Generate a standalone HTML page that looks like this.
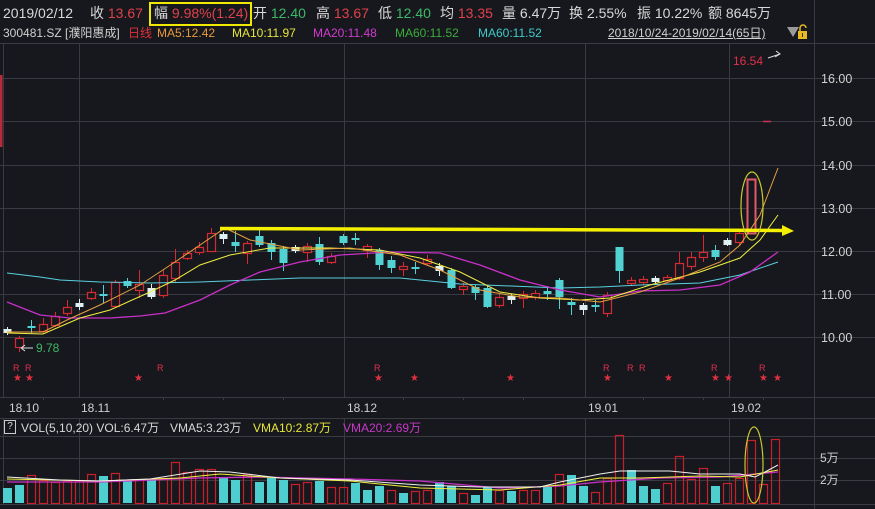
<!DOCTYPE html>
<html><head><meta charset="utf-8">
<style>
html,body{margin:0;padding:0;background:#17181d;}
#w{position:relative;width:875px;height:509px;overflow:hidden;background:#17181d;font-family:"Liberation Sans","Noto Sans CJK SC",sans-serif;}
.t{position:absolute;white-space:nowrap;line-height:1;}
.l1{top:6px;font-size:14px;color:#d8d8d8;}
.l2{top:27px;font-size:12px;color:#d0d0d0;}
.r{color:#e0404a}.g{color:#3cb868}
svg{position:absolute;left:0;top:0;}
</style></head><body><div id="w">
<svg id="s" width="875" height="509" xmlns="http://www.w3.org/2000/svg"></svg>

<div class="t l1" style="left:3px">2019/02/12</div>
<div class="t l1" style="left:90px">收 <span class="r">13.67</span></div>
<div style="position:absolute;left:149px;top:2px;width:99px;height:20px;border:2px solid #f0e800;"></div>
<div class="t l1" style="left:154px">幅 <span class="r">9.98%(1.24)</span></div>
<div class="t l1" style="left:253px">开 <span class="g">12.40</span></div>
<div class="t l1" style="left:316px">高 <span class="r">13.67</span></div>
<div class="t l1" style="left:378px">低 <span class="g">12.40</span></div>
<div class="t l1" style="left:440px">均 <span class="r">13.35</span></div>
<div class="t l1" style="left:502px">量 6.47万</div>
<div class="t l1" style="left:569px">换 2.55%</div>
<div class="t l1" style="left:637px">振 10.22%</div>
<div class="t l1" style="left:708px">额 8645万</div>

<div class="t l2" style="left:3px">300481.SZ [濮阳惠成]</div>
<div class="t l2" style="left:128px;color:#e0303a">日线</div>
<div class="t l2" style="left:157px;color:#e89a3c">MA5:12.42</div>
<div class="t l2" style="left:232px;color:#e6e63a">MA10:11.97</div>
<div class="t l2" style="left:313px;color:#d03cd0">MA20:11.48</div>
<div class="t l2" style="left:395px;color:#3cae3c">MA60:11.52</div>
<div class="t l2" style="left:478px;color:#3ccccc">MA60:11.52</div>
<div class="t l2" style="left:608px;text-decoration:underline;">2018/10/24-2019/02/14(65日)</div>

<div class="t" style="left:733px;top:55px;font-size:12px;color:#e0304a">16.54</div>
<div class="t" style="left:36px;top:342px;font-size:12px;color:#3cb868">9.78</div>

<div class="t" style="left:9px;top:402px;font-size:12px;color:#d0d0d0">18.10</div>
<div class="t" style="left:81px;top:402px;font-size:12px;color:#d0d0d0">18.11</div>
<div class="t" style="left:347px;top:402px;font-size:12px;color:#d0d0d0">18.12</div>
<div class="t" style="left:588px;top:402px;font-size:12px;color:#d0d0d0">19.01</div>
<div class="t" style="left:731px;top:402px;font-size:12px;color:#d0d0d0">19.02</div>

<div style="position:absolute;left:4px;top:420px;width:10px;height:12px;border:1px solid #ccc;color:#ddd;font-size:10px;line-height:12px;text-align:center;font-family:'Liberation Sans',sans-serif">?</div>
<div class="t" style="left:21px;top:422px;font-size:12px;color:#d8d8d8">VOL(5,10,20) VOL:6.47万</div>
<div class="t" style="left:170px;top:422px;font-size:12px;color:#d8d8d8">VMA5:3.23万</div>
<div class="t" style="left:253px;top:422px;font-size:12px;color:#e6e63a">VMA10:2.87万</div>
<div class="t" style="left:343px;top:422px;font-size:12px;color:#c838c8">VMA20:2.69万</div>
<div class="t" style="left:820px;top:452px;font-size:12px;color:#cfcfcf">5万</div>
<div class="t" style="left:820px;top:474px;font-size:12px;color:#cfcfcf">2万</div>

<script>
var s=document.getElementById('s'),h='';
function L(x1,y1,x2,y2,c,w){h+='<line x1="'+x1+'" y1="'+y1+'" x2="'+x2+'" y2="'+y2+'" stroke="'+c+'" stroke-width="'+(w||1)+'"/>';}
function T(x,y,t,c,sz){h+='<text x="'+x+'" y="'+y+'" fill="'+c+'" font-size="'+(sz||12)+'" font-family="Liberation Sans,sans-serif">'+t+'</text>';}
var G='#393a42';
[43,78,121,165,208,251,294,337,397,418,436,458,480,504].forEach(function(y){L(0,y+.5,875,y+.5,G);});
[3,79,344,585,729].forEach(function(x){L(x+.5,43,x+.5,397,G);L(x+.5,418,x+.5,504,G);});
L(814.5,0,814.5,509,G);
h+='<rect x="0" y="75" width="2.5" height="72" fill="#b82a3a"/>';
[['16.00',78],['15.00',121],['14.00',165],['13.00',208],['12.00',251],['11.00',294],['10.00',337]].forEach(function(a){L(814,a[1]+.5,820,a[1]+.5,G);T(821,a[1]+5,a[0],'#d0d0d0',12.5);});
var C=[[7,329,333,327,335,'w'],[19,338,347,336,352,'r'],[31,326,328,320,333,'c'],[43,324,331,318,333,'r'],[55,316,325,312,327,'r'],[67,307,313,300,316,'r'],[79,303,307,299,310,'w'],[91,292,298,288,300,'r'],[103,294,296,285,303,'c'],[115,282,306,280,308,'r'],[127,281,286,278,288,'c'],[139,284,290,270,298,'r'],[151,288,297,284,299,'w'],[163,275,295,270,298,'r'],[175,262,278,249,282,'r'],[187,253,258,250,260,'r'],[199,247,252,242,255,'r'],[211,233,251,228,252,'r'],[223,234,239,232,244,'w'],[235,242,246,231,252,'c'],[247,243,253,241,264,'r'],[259,236,245,230,247,'c'],[271,243,252,240,260,'c'],[283,249,263,246,271,'c'],[295,247,251,245,253,'w'],[307,246,252,243,262,'r'],[319,244,262,237,265,'c'],[331,256,262,253,264,'r'],[343,236,243,234,245,'c'],[355,238,240,233,245,'c'],[367,246,250,244,258,'r'],[379,250,265,248,270,'c'],[391,260,268,256,273,'c'],[403,266,269,262,276,'r'],[415,267,269,262,274,'c'],[427,259,263,255,266,'r'],[439,266,271,263,276,'w'],[451,270,288,268,289,'c'],[463,286,289,283,295,'r'],[475,287,293,285,300,'c'],[487,288,307,285,308,'c'],[499,297,305,294,308,'r'],[511,296,300,294,304,'w'],[523,294,298,291,308,'r'],[535,293,297,290,300,'r'],[547,291,294,286,300,'c'],[559,280,297,278,309,'c'],[571,302,305,298,315,'c'],[583,305,310,303,315,'w'],[595,305,307,300,312,'c'],[607,295,313,292,317,'r'],[619,247,271,247,283,'c'],[631,280,283,277,286,'r'],[643,279,282,276,285,'r'],[655,278,282,276,284,'w'],[667,277,280,275,282,'r'],[679,263,278,252,280,'r'],[691,257,266,252,270,'r'],[703,252,257,235,262,'r'],[715,250,257,245,260,'c'],[727,240,245,238,246,'w'],[739,233,242,230,245,'r'],[751,179,233,179,233,'r']];
C.forEach(function(k){var x=k[0],col=k[5]=='r'?'#d42a32':(k[5]=='c'?'#52d2d2':'#e0f0f0');
 L(x+.5,k[3],x+.5,k[1],col);L(x+.5,k[2],x+.5,k[4],col);
 if(k[5]=='r')h+='<rect x="'+(x-3.5)+'" y="'+(k[1]+.5)+'" width="8" height="'+Math.max(1,k[2]-k[1])+'" fill="#17181d" stroke="'+(x==751?'#e05a6a':col)+'" stroke-width="'+(x==751?2:1.2)+'"/>';
 else h+='<rect x="'+(x-3.5)+'" y="'+k[1]+'" width="8" height="'+Math.max(2,k[2]-k[1])+'" fill="'+col+'"/>';});
function P(pts,c,w){h+='<polyline points="'+pts+'" fill="none" stroke="'+c+'" stroke-width="'+(w||1)+'"/>';}
P('7,273 40,277 60,280 100,282 150,283 200,282 250,280 300,278 400,278 460,284 560,288 600,287 640,285 700,283 740,275 778,262','#5ad0e0');
P('7,302 40,315 70,318 110,318 140,316 165,313 200,300 230,285 260,272 300,262 340,255 390,252 440,253 480,265 520,280 560,290 600,297 640,291 680,290 720,285 750,272 778,252','#c830c8',1.3);
P('7,333 43,334 80,318 110,310 150,292 175,280 200,265 230,255 270,248 330,248 380,250 420,258 460,272 500,292 540,298 580,300 610,298 650,285 700,272 740,258 760,240 778,215','#f0f040');
P('7,332 43,332 67,320 100,305 140,285 175,262 200,245 225,228 250,240 300,250 350,248 400,255 440,270 480,290 520,297 560,298 600,302 640,292 680,278 720,262 740,245 760,215 778,168','#e8a040');
h+='<line x1="220" y1="228.5" x2="784" y2="230.5" stroke="#f4f000" stroke-width="3.5"/><polygon points="782,225 794,231 782,236" fill="#f4f000"/>';
h+='<ellipse cx="752" cy="206" rx="11" ry="34" fill="none" stroke="#c8c830" stroke-width="1.2"/>';
L(763,121.5,771,121.5,'#d0305a',1.5);
P('768,58 780,54','#ddd');P('776,51 780,54 775,57','#ddd');
P('33,348 21,348','#ddd');P('25,345 21,348 25,351','#ddd');
[[17,1],[29,1],[138,0],[378,1],[414,0],[510,0],[607,1],[668,0],[715,1],[728,0],[763,1],[777,0]].forEach(function(a){T(a[0]-4,381,'★','#e03040',10);});
[17,29,161,378,607,631,643,715,763].forEach(function(x){T(x-4,371,'R','#e03050',9);});
[43,163,223,283,403,463,523,643,703,763].forEach(function(x){L(x+.5,397,x+.5,400,G);});
var V=[[7,488,'c'],[19,485,'c'],[31,475,'r'],[43,480,'r'],[55,482,'r'],[67,481,'r'],[79,481,'r'],[91,474,'r'],[103,476,'c'],[115,473,'r'],[127,481,'c'],[139,480,'r'],[151,480,'c'],[163,478,'r'],[175,462,'r'],[187,472,'r'],[199,469,'r'],[211,469,'r'],[223,478,'c'],[235,480,'c'],[247,474,'r'],[259,482,'c'],[271,478,'c'],[283,480,'c'],[295,484,'r'],[307,482,'r'],[319,481,'c'],[331,487,'r'],[343,487,'r'],[355,483,'c'],[367,490,'c'],[379,486,'c'],[391,490,'r'],[403,493,'c'],[415,491,'r'],[427,490,'r'],[439,482,'c'],[451,486,'c'],[463,493,'r'],[475,495,'c'],[487,487,'c'],[499,490,'r'],[511,491,'c'],[523,490,'r'],[535,490,'r'],[547,487,'c'],[559,474,'r'],[571,475,'c'],[583,486,'c'],[595,492,'r'],[607,478,'r'],[619,435,'r'],[631,470,'c'],[643,486,'c'],[655,489,'c'],[667,483,'r'],[679,456,'r'],[691,479,'r'],[703,468,'r'],[715,486,'c'],[727,483,'r'],[739,478,'r'],[751,440,'r'],[763,484,'r'],[775,439,'r']];
V.forEach(function(v){var x=v[0];if(v[2]=='c')h+='<rect x="'+(x-4)+'" y="'+v[1]+'" width="9" height="'+(503-v[1])+'" fill="#4ecece"/>';else h+='<rect x="'+(x-3.5)+'" y="'+(v[1]+.5)+'" width="8" height="'+(503-v[1])+'" fill="none" stroke="#c8202a" stroke-width="1.2"/>';});
P('7,482 100,482 200,478 260,477 350,479 420,481 500,488 560,486 600,482 660,478 720,477 778,472','#c830c8',1.3);
P('7,479 100,481 180,478 220,474 280,478 350,481 420,488 500,490 560,485 600,478 640,478 700,476 740,477 778,470','#f0f040');
P('7,477 60,480 100,481 150,479 200,471 230,472 280,478 350,480 420,485 480,487 540,487 560,482 580,478 600,474 620,471 670,471 700,474 740,474 755,477 765,472 778,465','#f0f0f0');
h+='<ellipse cx="754" cy="465" rx="9" ry="38" fill="none" stroke="#c8c830" stroke-width="1.2"/>';
h+='<polygon points="787,27 799,27 793,37" fill="#9a9a9a"/><rect x="798" y="31" width="9" height="8" fill="#e8b820"/><path d="M800,31 v-3 a3,3 0 0 1 6,0" fill="none" stroke="#e8b820" stroke-width="1.5"/><rect x="802" y="33" width="1" height="4" fill="#333"/>';
s.innerHTML=h;
</script>
</div></body></html>
